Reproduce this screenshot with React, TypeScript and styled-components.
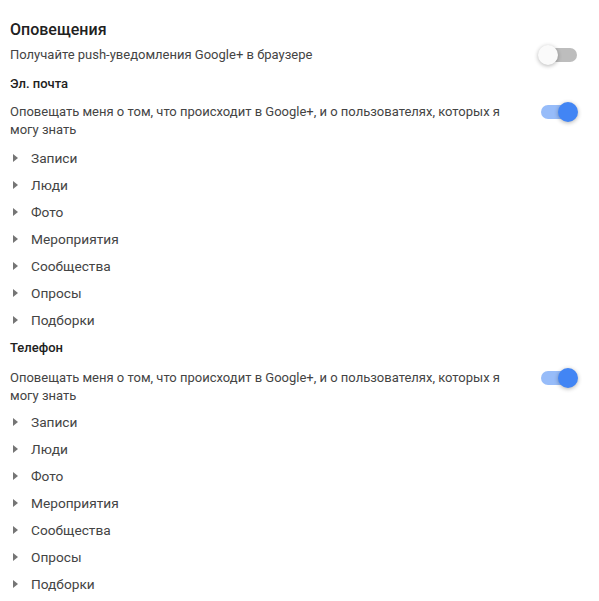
import React from "react";
import styled, { createGlobalStyle } from "styled-components";

const Global = createGlobalStyle`
  html, body { margin: 0; padding: 0; background: #fff; }
  body { font-family: Roboto, "Noto Sans", Arial, sans-serif; }
`;

const Page = styled.div`
  width: 567px;
  padding: 20px 0 0 10px;
  box-sizing: content-box;
`;

const Title = styled.h1`
  margin: 0;
  font-size: 16px;
  line-height: 20px;
  font-weight: 500;
  color: #212121;
`;

const Row = styled.div<{ $mt?: number }>`
  display: flex;
  align-items: flex-start;
  justify-content: space-between;
  margin-top: ${(p) => p.$mt ?? 0}px;
`;

const Desc = styled.div<{ $lh: number }>`
  font-size: 13px;
  line-height: ${(p) => p.$lh}px;
  color: #444;
  max-width: 492px;
`;

const Header = styled.h2<{ $mt: number }>`
  margin: ${(p) => p.$mt}px 0 0 0;
  font-size: 13px;
  line-height: 27px;
  font-weight: 500;
  color: #212121;
`;

const ToggleWrap = styled.div<{ $top: number }>`
  position: relative;
  width: 36px;
  height: 14px;
  margin-top: ${(p) => p.$top}px;
  flex-shrink: 0;
`;

const Track = styled.div<{ $on: boolean }>`
  width: 36px;
  height: 14px;
  border-radius: 7px;
  background: ${(p) => (p.$on ? "rgba(66,133,244,0.55)" : "#bdbdbd")};
`;

const Knob = styled.div<{ $on: boolean }>`
  position: absolute;
  top: -3px;
  left: ${(p) => (p.$on ? 17 : -3)}px;
  width: 20px;
  height: 20px;
  border-radius: 50%;
  background: ${(p) => (p.$on ? "#4285f4" : "#fafafa")};
  box-shadow: 0 1px 4px rgba(0, 0, 0, 0.3);
`;

const List = styled.ul<{ $mt: number }>`
  list-style: none;
  margin: ${(p) => p.$mt}px 0 0 0;
  padding: 0;
`;

const Item = styled.li`
  display: flex;
  align-items: center;
  height: 27px;
  font-size: 13.7px;
  color: #444;
`;

const Caret = styled.span`
  width: 0;
  height: 0;
  margin-left: 3px;
  margin-right: 13px;
  border-top: 4px solid transparent;
  border-bottom: 4px solid transparent;
  border-left: 5px solid #757575;
`;

const Toggle = ({ on, top }: { on: boolean; top: number }) => (
  <ToggleWrap $top={top}>
    <Track $on={on} />
    <Knob $on={on} />
  </ToggleWrap>
);

const items = ["Записи", "Люди", "Фото", "Мероприятия", "Сообщества", "Опросы", "Подборки"];

const Section = ({
  name,
  headTop,
  descTop,
  listTop,
}: {
  name: string;
  headTop: number;
  descTop: number;
  listTop: number;
}) => (
  <section>
    <Header $mt={headTop}>{name}</Header>
    <Row $mt={descTop}>
      <Desc $lh={18}>
        Оповещать меня о том, что происходит в Google+, и о пользователях, которых я могу знать
      </Desc>
      <Toggle on top={2} />
    </Row>
    <List $mt={listTop}>
      {items.map((t) => (
        <Item key={t}>
          <Caret />
          {t}
        </Item>
      ))}
    </List>
  </section>
);

export default function App() {
  return (
    <Page>
      <Global />
      <Title>Оповещения</Title>
      <Row $mt={5}>
        <Desc $lh={20}>Получайте push-уведомления Google+ в браузере</Desc>
        <Toggle on={false} top={3} />
      </Row>
      <Section name="Эл. почта" headTop={5} descTop={6} listTop={5} />
      <Section name="Телефон" headTop={1} descTop={8} listTop={3} />
    </Page>
  );
}
